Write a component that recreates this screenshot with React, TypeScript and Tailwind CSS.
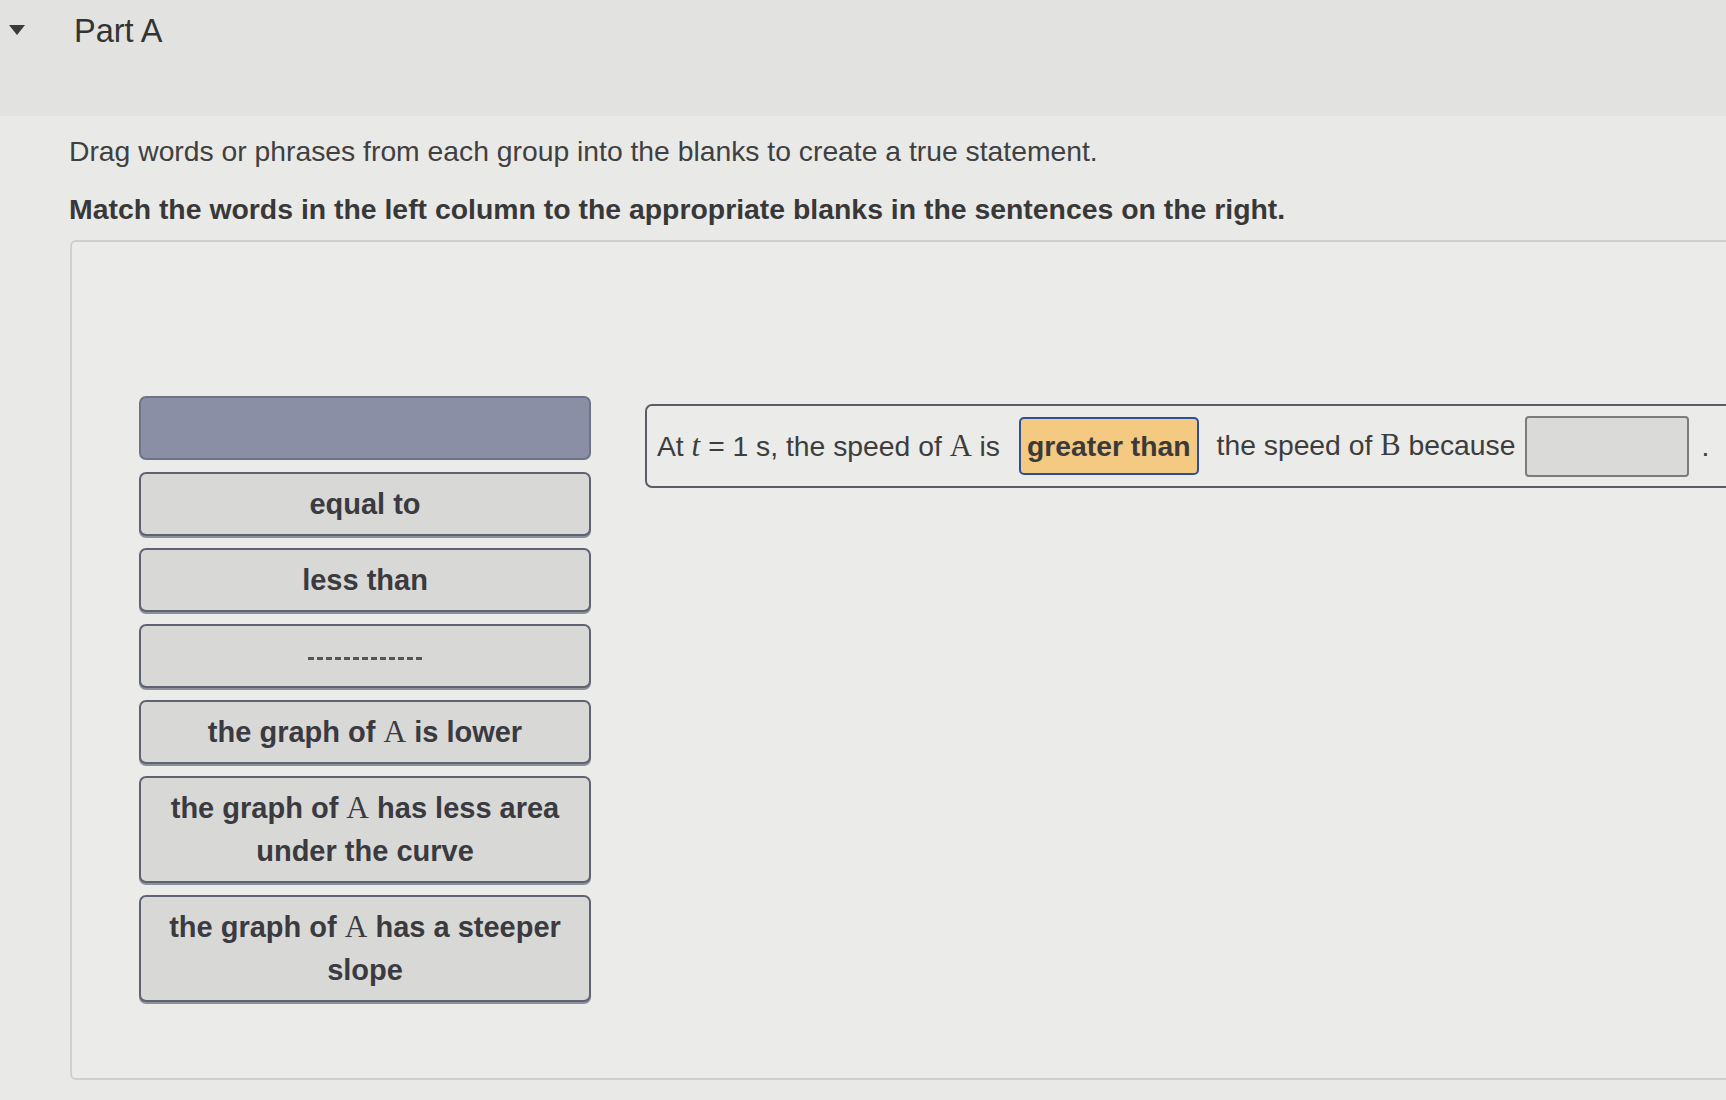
import React from "react";

const sans = { fontFamily: '"Liberation Sans", Arial, sans-serif' };

function MathA({ ch }: { ch: string }) {
  return <span className="font-['Liberation_Serif',serif] font-normal text-[1.08em]">{ch}</span>;
}

function Chip({ children, tall }: { children: React.ReactNode; tall?: boolean }) {
  return (
    <div
      className={`flex items-center justify-center rounded-[7px] border-2 border-[#5f6272] bg-[#d8d8d6] px-5 text-center text-[29px] font-bold text-[#3a3a40] shadow-[0_2px_0_#8c8f9a] ${
        tall ? "h-[107px] leading-[43px]" : "h-[64px] leading-none"
      }`}
    >
      <div>{children}</div>
    </div>
  );
}

export default function App() {
  return (
    <div
      className="relative h-[1100px] w-[1726px] overflow-hidden bg-[#e9e9e7] text-[#3a3a3a]"
      style={sans}
    >
      <div className="flex h-[116px] items-start bg-[#e2e2e0] pt-[12px]">
        <div className="ml-[9px] mt-[13px] h-0 w-0 border-x-[8px] border-t-[10px] border-x-transparent border-t-[#3a3a3a]" />
        <h1 className="ml-[49px] text-[32.5px] leading-[38px] text-[#333]">Part A</h1>
      </div>

      <div className="pl-[69px]">
        <p className="mt-[19px] text-[28.3px] leading-[32px] text-[#404040]">
          Drag words or phrases from each group into the blanks to create a true statement.
        </p>
        <p className="mt-[26px] text-[28.4px] font-bold leading-[32px] text-[#383838]">
          Match the words in the left column to the appropriate blanks in the sentences on the right.
        </p>
      </div>

      <div className="ml-[70px] mt-[15px] h-[840px] w-[1720px] rounded-[6px] border-2 border-[#cfcfcd] bg-[#ebebe9] pt-[154px] pl-[67px]">
        <div className="flex items-start gap-[54px]">
          <div className="flex w-[452px] shrink-0 flex-col gap-[12px]">
            <div className="h-[64px] rounded-[7px] border-2 border-[#6f7388] bg-[#8a8fa5]" />
            <Chip>equal to</Chip>
            <Chip>less than</Chip>
            <Chip>
              <div className="mt-[4px] w-[114px] border-b-[3px] border-dashed border-[#555]" />
            </Chip>
            <Chip>
              the graph of <MathA ch="A" /> is lower
            </Chip>
            <Chip tall>
              the graph of <MathA ch="A" /> has less area
              <br />
              under the curve
            </Chip>
            <Chip tall>
              the graph of <MathA ch="A" /> has a steeper
              <br />
              slope
            </Chip>
          </div>

          <div className="mt-[8px] flex h-[84px] w-[1200px] shrink-0 items-center rounded-l-[7px] border-2 border-[#5a5d68] bg-[#ebebe9] pl-[10px] text-[28.3px] text-[#3d3d3d]">
            <span className="whitespace-nowrap">
              At <span className="font-['Liberation_Serif',serif] italic text-[1.1em]">t</span> = 1 s, the speed of{" "}
              <MathA ch="A" /> is
            </span>
            <span className="ml-[19px] flex h-[58px] items-center whitespace-nowrap rounded-[5px] border-2 border-[#2e4f9c] bg-[#f4c982] px-[6px] font-bold text-[#3a3a3a]">
              greater than
            </span>
            <span className="ml-[18px] whitespace-nowrap">
              the speed of <MathA ch="B" /> because
            </span>
            <span className="ml-[10px] h-[61px] w-[164px] shrink-0 rounded-[4px] border-2 border-[#7c7c7c] bg-[#dadad8]" />
            <span className="ml-[12px]">.</span>
          </div>
        </div>
      </div>
    </div>
  );
}
